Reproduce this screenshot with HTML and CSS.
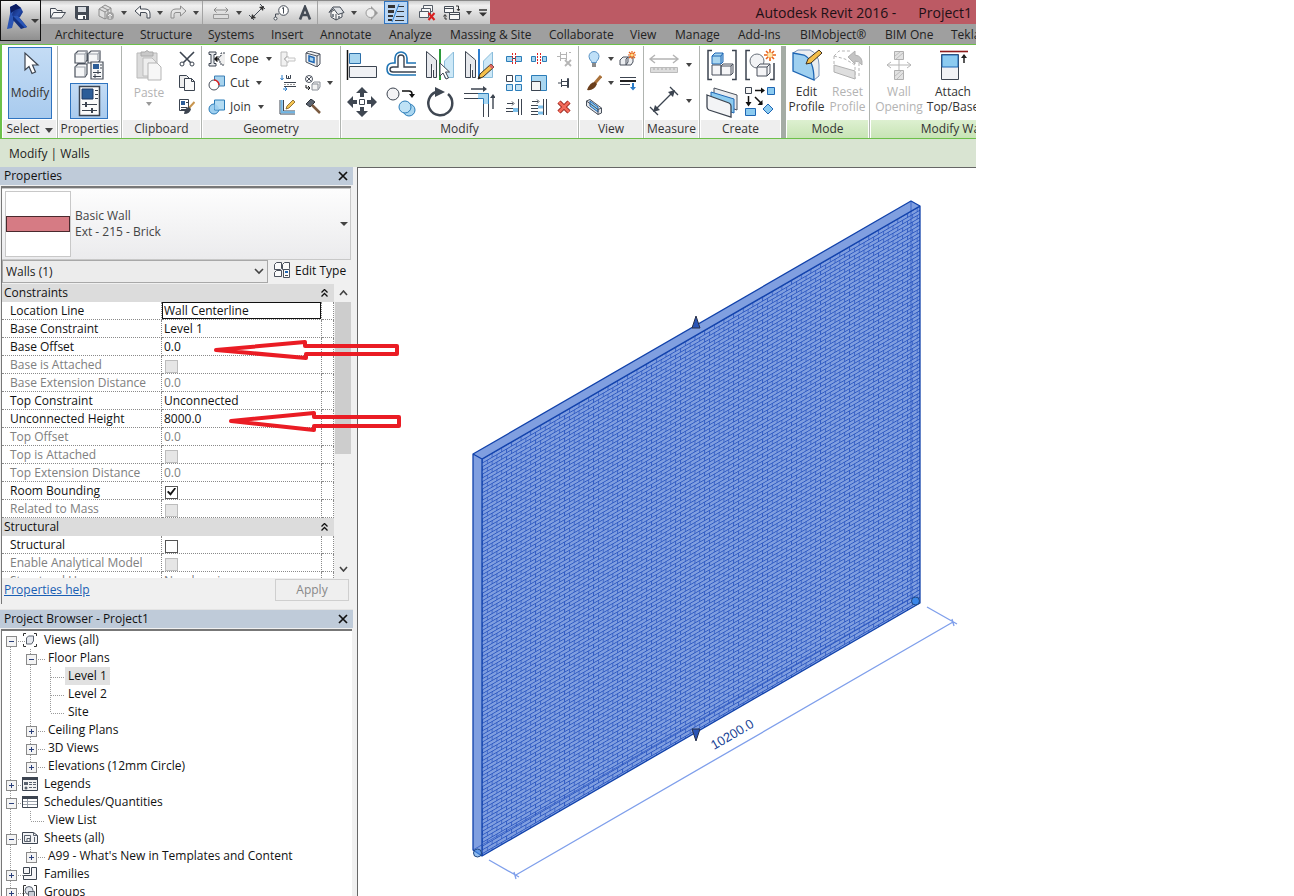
FILE: index.html
```html
<!DOCTYPE html>
<html lang="en">
<head>
<meta charset="utf-8">
<title>Autodesk Revit 2016 - Project1</title>
<link rel="stylesheet" href="styles.css">
</head>
<body>
<div class="app">
  <header class="head">
    <button class="appbtn" aria-label="Application menu">
      <svg width="40" height="40" viewBox="0 0 40 40"><defs><linearGradient id="rg" x1="0" y1="0" x2="1" y2="1"><stop offset="0" stop-color="#0b1b5e"/><stop offset=".6" stop-color="#2349a8"/><stop offset="1" stop-color="#0d2470"/></linearGradient></defs><path d="M9 6 15 3 15 12 11 27 6 28 9 13Z" fill="#2b55b4"/><path d="M15 3 20 7 22 11 19 16 14 18 11 14Z" fill="url(#rg)"/><path d="M9 6 15 3 20 7 14 9 10 12Z" fill="#0b1c62"/><path d="M12 15 17 15 26 26 20 28 12 19Z" fill="#12307f"/><path d="M12 15 17 15 26 26 24 27Z" fill="#2a56b8"/><path d="M30 18h8l-4 4z" fill="#3a3a3a"/></svg>
    </button>
    <div class="titlebar">
      <div class="qat">
        <button aria-label="Open"><svg width="18" height="16" viewBox="0 0 18 16"><path d="M1.500 13V3.500h5l1.500 2h5v2M1.500 13l3-5.500h12L12.500 13z" fill="#f5f5f5" stroke="#444b55"/></svg></button>
        <button aria-label="Save"><svg width="16" height="16" viewBox="0 0 16 16"><path d="M1 1h14v14H3l-2-2z" fill="#444b55"/><path d="M4 2h8v5H4z" fill="#d7dbe0"/><path d="M4 10h8v4H4z" fill="#fff"/><path d="M9 11h2v3H9z" fill="#444b55"/></svg></button>
        <button aria-label="Synchronize"><svg width="17" height="17" viewBox="0 0 17 17"><g fill="#dedede" stroke="#8c8c8c"><path d="M1 5l6-4 6 3v7l-6 4-6-3z"/><path d="M1 5l6 3 6-4M7 8v7M4 3l6 3v7"/></g><circle cx="12" cy="12" r="4" fill="#a2a2a2"/><path d="M10 12l2-2 2 2M12 10v5" stroke="#eee" fill="none"/></svg></button>
        <button class="car" aria-label="Sync options"></button>
        <button aria-label="Undo"><svg width="17" height="15" viewBox="0 0 17 15"><path d="M1 6 6.500 1v3H11q5 0 5 5v4h-3V9.500Q13 7.500 11 7.500H6.500V11z" fill="#f7f7f7" stroke="#444b55"/></svg></button>
        <button class="car" aria-label="Undo list"></button>
        <button aria-label="Redo"><svg width="17" height="15" viewBox="0 0 17 15"><path d="M16 6 10.500 1v3H6q-5 0-5 5v4h3V9.500Q4 7.500 6 7.500h4.500V11z" fill="#e4e4e4" stroke="#8e8e8e"/></svg></button>
        <button class="car" aria-label="Redo list"></button>
        <i class="sep"></i>
        <button aria-label="Measure"><svg width="16" height="12" viewBox="0 0 16 12"><path d="M1 3h14M3.500.5 1 3l2.500 2.500M12.500.5 15 3l-2.500 2.500" fill="none" stroke="#8a8a8a"/><path d="M.5 7.500h15v4H.5z" fill="#ddd" stroke="#999"/></svg></button>
        <button class="car" aria-label="Measure options"></button>
        <button aria-label="Aligned dimension"><svg width="17" height="17" viewBox="0 0 17 17"><path d="M3 14 14 3M0 11l5 5M11 0l5 5" stroke="#444b55" fill="none"/><path d="M2 15l1-5 4 4zM15 2l-1 5-4-4z" fill="#333"/></svg></button>
        <button aria-label="Tag"><svg width="16" height="16" viewBox="0 0 16 16"><circle cx="10.500" cy="5.500" r="4.800" fill="#fff" stroke="#444b55"/><path d="M10.500 8.500v-6l-1.500 1M6 9H2.500v4" fill="none" stroke="#444b55"/><circle cx="2.500" cy="13.500" r="1.500" fill="#fff" stroke="#444b55"/></svg></button>
        <button aria-label="Text"><svg width="16" height="16" viewBox="0 0 16 16"><path d="M3 14.500 8 2l5 12.500M5 10h6" fill="none" stroke="#444b55" stroke-width="2.600"/></svg></button>
        <i class="sep"></i>
        <button aria-label="3D view"><svg width="17" height="16" viewBox="0 0 17 16"><path d="M3 7v5l5 3 6-3V7L9 3z" fill="#f4f4f4" stroke="#444b55"/><path d="M1 7.500 5 2h7l4 5.500-6 2L5.500 3.500 1 7.500M8 9v6" fill="#dfe2e6" stroke="#444b55"/><path d="M4 9h2v3H4zM10 11h2v2h-2z" fill="#7c838c"/></svg></button>
        <button class="car" aria-label="3D options"></button>
        <button aria-label="Section"><svg width="14" height="14" viewBox="0 0 14 14"><path d="M6 0v14l7-7z" fill="#9a9a9a"/><circle cx="5.500" cy="7" r="4.500" fill="#eee" stroke="#999"/></svg></button>
        <button class="on" aria-label="Thin lines" aria-pressed="true"><svg width="18" height="18" viewBox="0 0 18 18"><path d="M1 2.500h7M1 7.500h6" stroke="#333" stroke-width="3"/><path d="M1 12h5M1 16h4" stroke="#333" stroke-width="2"/><path d="M11 2.500h6M10 7.500h7M9 12.500h8M8 16.500h9" stroke="#333"/><path d="M12 0 5 18" stroke="#2a7fd0"/></svg></button>
        <i class="sep"></i>
        <button aria-label="Close hidden windows"><svg width="17" height="17" viewBox="0 0 17 17"><g fill="#f7f7f7" stroke="#555c66"><path d="M4.500 1.500h9v6h-9z"/><path d="M2.500 4.500h9v6h-9z"/><path d="M.5 7.500h9v6h-9z"/></g><path d="m9.500 9 6 7M15.500 9l-6 7" stroke="#d81f1f" stroke-width="2"/></svg></button>
        <button aria-label="Switch windows"><svg width="17" height="17" viewBox="0 0 17 17"><g fill="#f7f7f7" stroke="#444b55"><path d="M1.500 2.500h9v6h-9z"/><path d="M6.500 8.500h10v7h-10zM6.500 10.500h10M1.500 4.500h9"/></g><path d="M13 2h2.500v4M14 5l1.500 2L17 5M4 15H2v-4M.5 12.500 2 10.500l1.500 2" fill="none" stroke="#333"/></svg></button>
        <button class="car" aria-label="Window list"></button>
        <button class="cust" aria-label="Customize toolbar"><svg width="10" height="8" viewBox="0 0 10 8"><path d="M1 1h8" stroke="#333" stroke-width="1.500"/><path d="M1 3.500h8L5 7.500z" fill="#333"/></svg></button>
      </div>
      <div class="title"><span>Autodesk Revit 2016 -</span><span>Project1</span></div>
    </div>
    <nav class="tabs">
      <a href="#">Architecture</a><a href="#">Structure</a><a href="#">Systems</a><a href="#">Insert</a><a href="#">Annotate</a><a href="#">Analyze</a><a href="#">Massing &amp; Site</a><a href="#">Collaborate</a><a href="#">View</a><a href="#">Manage</a><a href="#">Add-Ins</a><a href="#">BIMobject®</a><a href="#">BIM One</a><a href="#">Tekla</a>
    </nav>
  </header>

  <section class="ribbon" aria-label="Ribbon">
    <div class="pan p-select"><div class="body">
      <button class="big on"><svg width="32" height="32" viewBox="0 0 32 32"><path d="M11 4v17l4-3.500 3 7 3.500-1.500-3-7H24z" fill="#fff" stroke="#3c4450" stroke-width="1.200"/></svg><span>Modify</span></button>
    </div><h2>Select <i class="tri"></i></h2></div>

    <div class="pan p-prop"><div class="body col">
      <button class="lg" aria-label="Type properties"><svg width="32" height="32" viewBox="0 0 32 32"><g fill="#f6f7f8" stroke="#4a515c" stroke-width="1.200"><path d="M2 5l3-3h9v9l-2 3H2zM15 5l3-3h9v9l-2 3H15zM2 18l3-3h9v10l-2 3H2z"/><path d="M2 5h10v9M12 5l2-3M15 5h10v6M25 5l2-3M2 18h10v9" fill="none" stroke="#9aa0a8"/><path d="M18 13h12v17H18z"/></g><path d="M20 15h6v5h-6z" fill="#2c5d98"/><path d="M27 16h2M27 19h2M20 23.500h8M20 27.500h8M25 21v4M22 25v4" stroke="#3c4450"/></svg></button>
      <button class="lg on" aria-label="Properties palette"><svg width="32" height="32" viewBox="0 0 32 32"><path d="M6.500 1.500h20v29h-20z" fill="#fbfbfb" stroke="#3c4450" stroke-width="1.500"/><path d="M9 4h11v10H9z" fill="#2c5d98" stroke="#1c3b66"/><path d="M22 5.500h3M22 9.500h3M22 13.500h3M9 19.500h15M9 25.500h15" stroke="#3c4450"/><path d="M13 17v5M19 23v5" stroke="#3c4450" stroke-width="2"/></svg></button>
    </div><h2>Properties</h2></div>

    <div class="pan p-clip"><div class="body">
      <button class="big off"><svg width="32" height="32" viewBox="0 0 32 32"><path d="M4 4h20v25H4z" fill="#dcdcdc" stroke="#b9b9b9"/><path d="M8 3h4q2-3 4 0h4v4H8z" fill="#c9c9c9" stroke="#aaa"/><path d="M10 9h9l4 4v14H10z" fill="#eee" stroke="#bdbdbd"/><path d="M15 14h9l4 4v13H15z" fill="#f7f7f7" stroke="#b5b5b5"/></svg><span>Paste</span><i class="tri sm"></i></button>
      <div class="col">
        <button class="s" aria-label="Cut"><svg width="16" height="16" viewBox="0 0 16 16"><path d="M1 1 13 13M15 1 3 13" stroke="#3c4450" stroke-width="1.600"/><circle cx="3" cy="13" r="2" fill="#fff" stroke="#3c4450"/><circle cx="13" cy="13" r="2" fill="#fff" stroke="#3c4450"/></svg></button>
        <button class="s" aria-label="Copy"><svg width="16" height="16" viewBox="0 0 16 16"><path d="M.5.5h7l3 3v9H.5z" fill="#eee" stroke="#3c4450"/><path d="M5.500 3.500h7l3 3v9h-10zM12.500 3.500v3h3" fill="#fafafa" stroke="#3c4450"/></svg></button>
        <button class="s" aria-label="Match type"><svg width="16" height="16" viewBox="0 0 16 16"><path d="M.5.5h9v11h-9z" fill="#fff" stroke="#3c4450"/><path d="M2 2h4v4H2z" fill="#2c5d98"/><path d="M7 3.500h2M2 8.500h6M2 10.500h5" stroke="#3c4450"/><path d="M15.500 3 10 9" stroke="#c8954e" stroke-width="2"/><path d="M10 8q-4 0-5 7 6 0 7-5z" fill="#3c4450"/></svg></button>
      </div>
    </div><h2>Clipboard</h2></div>

    <div class="pan p-geo"><div class="body">
      <div class="col">
        <button class="t"><svg width="18" height="16" viewBox="0 0 18 16"><path d="M1 1h7v2.500H6v9h2V15H1v-2.500h2v-9H1z" fill="#e9ebee" stroke="#3c4450"/><path d="M7 8h5M9.500 5.500 7 8l2.500 2.500" stroke="#111" fill="none" stroke-width="1.500"/><path d="M17 2h-4v3h-2v6h2v3h4" fill="#eee" stroke="#3c4450" stroke-dasharray="2 1"/></svg><span>Cope</span><i class="tri sm"></i></button>
        <button class="t"><svg width="18" height="16" viewBox="0 0 18 16"><path d="M6.500 1h10v10h-10z" fill="#a6d3ee" stroke="#3c7fb5"/><circle cx="6" cy="10" r="5" fill="#fff" stroke="#4a515c"/><path d="M6 5a5 5 0 0 1 5 5" fill="none" stroke="#d22" stroke-width="1.500"/></svg><span>Cut</span><i class="tri sm"></i></button>
        <button class="t"><svg width="18" height="16" viewBox="0 0 18 16"><circle cx="6" cy="10" r="5" fill="#9fd0f0" stroke="#2b7cb8"/><path d="M6.500 1h10v10h-10z" fill="#b4dcf3" stroke="#2b7cb8"/><path d="M6.500 5.200a5 5 0 0 1 4.500 5.300H6.500z" fill="#9fd0f0"/></svg><span>Join</span><i class="tri sm"></i></button>
      </div>
      <div class="col">
        <button class="s" aria-label="Wall joins"><svg width="16" height="16" viewBox="0 0 16 16"><path d="M1 1h6v4l-3 3 3 3v4H1z" fill="#f1f1f1" stroke="#bbb"/><path d="M5 8l3-3v2h7v3H8v2z" fill="#fafafa" stroke="#c4c4c4"/></svg></button>
        <button class="s" aria-label="Beam joins"><svg width="16" height="16" viewBox="0 0 16 16"><path d="M2 0v4M.5 3 2 5l1.500-2M3 14h4M5 12l2 2-2 2" stroke="#2b7cc8" fill="none"/><path d="M6.500 0v3.500h4V0M8.500 1v2M4 7.500h12M4 11.500h12" stroke="#3c4450" fill="none"/><path d="M4 9.500h12" stroke="#999" stroke-dasharray="2 1"/></svg></button>
        <button class="s" aria-label="Paint joins"><svg width="17" height="16" viewBox="0 0 17 16"><path d="M1 1v14h15M4.500 1v11H16" stroke="#3c4450" fill="none"/><path d="M2.700 1v12.300H16" stroke="#6fb5e4" stroke-width="2" fill="none"/><path d="m7 10 1-3 6-6 2 2-6 6z" fill="#f5c451" stroke="#7a5a1e" stroke-width=".8"/></svg></button>
      </div>
      <div class="col">
        <button class="s" aria-label="Split face"><svg width="16" height="16" viewBox="0 0 16 16"><path d="M1 2 4 0l11 3v10l-3 3L1 11z" fill="#eef0f2" stroke="#4a515c"/><path d="M1 2l11 3v11M12 5l3-2" fill="none" stroke="#4a515c"/><path d="m4 5 5 1.500v5L4 10z" fill="#a6d3ee" stroke="#1e66b4" stroke-width="1.500"/></svg></button>
        <button class="s" aria-label="Paint"><svg width="16" height="16" viewBox="0 0 16 16"><circle cx="4" cy="4" r="3.500" fill="#fff" stroke="#4a515c"/><path d="m1.500 1.500 5 5M6.500 1.500l-5 5" stroke="#4a515c"/><path d="M7 9l2-2h6v5l-2 3H7zM7 9h6v5" fill="#f3f3f3" stroke="#8a8f97"/><path d="M1 10v3h3M3 11l2 2-2 2" fill="none" stroke="#111"/></svg></button>
        <button class="s" aria-label="Demolish"><svg width="16" height="16" viewBox="0 0 16 16"><path d="m1 5 5-5 4 3-5 5z" fill="#5a626e" stroke="#2e343c"/><path d="m7 6 8 8" stroke="#7a5a40" stroke-width="2.500"/></svg></button>
      </div>
      <button class="s dd mid" aria-label="Paint options"></button>
    </div><h2>Geometry</h2></div>

    <div class="pan p-mod"><div class="body">
      <div class="lgrid">
        <button class="lg" aria-label="Align"><svg width="32" height="32" viewBox="0 0 32 32"><path d="M1.500 1v30" stroke="#111" stroke-width="1.500"/><path d="M3.500 4.500h11v10h-11z" fill="#a9d6f0" stroke="#2b6ea8"/><path d="M3.500 17.500h27v11h-27z" fill="#f0f1f4" stroke="#3c4450"/></svg></button>
        <button class="lg" aria-label="Offset"><svg width="32" height="32" viewBox="0 0 32 32"><path d="M31 14H22V9a6 6 0 0 0-12 0v5H8q-6 0-6 6t6 6h23" fill="none" stroke="#1f74b4" stroke-width="1.600"/><path d="M31 18H19V9a3 3 0 0 0-6 0v9H8q-3 0-3 2.500T8 23h23" fill="none" stroke="#3c4450" stroke-width="1.400"/></svg></button>
        <button class="lg" aria-label="Mirror pick axis"><svg width="32" height="32" viewBox="0 0 32 32"><path d="M2.500 2.500v26h5V15M12.500 28.500V11L2.500 2.500M7.500 15v13.500M9.500 21v7.500h3" fill="#e6e8ec" stroke="#3c4450"/><path d="M16 0v31" stroke="#2e9a3a" stroke-width="2"/><path d="M29.500 3v25.500h-9V12z" fill="#cde8f7" stroke="#8bbddb"/><path d="M16 14v13l3-3 3 6 2.500-1-3-6h4z" fill="#fff" stroke="#3c4450"/></svg></button>
        <button class="lg" aria-label="Mirror draw axis"><svg width="32" height="32" viewBox="0 0 32 32"><path d="M2.500 2.500v26h5V15M12.500 28.500V11L2.500 2.500M7.500 15v13.500M9.500 21v7.500h3" fill="#e6e8ec" stroke="#3c4450"/><path d="M16 0v29" stroke="#2e7fd0" stroke-width="2"/><path d="M29.500 3v25.500h-9V12z" fill="#cde8f7" stroke="#8bbddb"/><path d="m15 30 2-5 11-10 3 3-11 10z" fill="#f5bf4a" stroke="#3c3020"/><path d="m15 30 1-3 2 2z" fill="#222"/><path d="m26 17 3 3 2-2-3-3z" fill="#d66"/></svg></button>
        <button class="lg" aria-label="Move"><svg width="32" height="32" viewBox="0 0 32 32"><path d="M16 1l6 6h-4v4h-4V7h-4zM16 31l6-6h-4v-4h-4v4h-4zM1 16l6-6v4h4v4H7v4zM31 16l-6-6v4h-4v4h4v4z" fill="#3f4752"/><path d="M13.500 13.500h5v5h-5z" fill="#fff" stroke="#3f4752"/></svg></button>
        <button class="lg" aria-label="Copy element"><svg width="32" height="32" viewBox="0 0 32 32"><circle cx="8" cy="8" r="6" fill="#f3f3f5" stroke="#3c4450"/><path d="M17 5h7q3 0 3 3v2" fill="none" stroke="#111" stroke-width="1.500"/><path d="M24 8h6l-3 4z" fill="#111"/><circle cx="24" cy="24" r="6" fill="#a9d6f0" stroke="#2b7cb8"/><circle cx="20" cy="21" r="6" fill="#bfe2f6" stroke="#2b7cb8"/></svg></button>
        <button class="lg" aria-label="Rotate"><svg width="32" height="32" viewBox="0 0 32 32"><path d="M12 6a12 12 0 1 0 12 2" fill="none" stroke="#3f4752" stroke-width="2.500"/><path d="M11 1l10 5-10 5z" fill="#3f4752"/></svg></button>
        <button class="lg" aria-label="Trim corner"><svg width="32" height="32" viewBox="0 0 32 32"><path d="M8 3h13M30 23V11" fill="none" stroke="#3c4450" stroke-width="1.400"/><path d="M20 0v6l4-3zM27 12h6l-3-4z" fill="#3c4450"/><path d="M1 7.500h14M1 12.500h14M20.500 31V18M25.500 31V18" stroke="#3c4450" fill="none"/><path d="M15 10h8v8" fill="none" stroke="#a9d6f0" stroke-width="5"/><path d="M15 7.500h10.500V18M15 12.500h5.500V18" fill="none" stroke="#2b7cb8"/></svg></button>
      </div>
      <div class="sgrid">
        <button class="s" aria-label="Split element"><svg width="16" height="16" viewBox="0 0 16 16"><path d="M.5 5.500h6v5h-6zM9.500 5.500h6v5h-6z" fill="#a9d6f0" stroke="#2b7cb8"/><path d="M6.500 2v12M9.500 2v12" stroke="#d22" stroke-dasharray="2 1"/><path d="M7 7.500h2" stroke="#3c4450"/></svg></button>
        <button class="s" aria-label="Split with gap"><svg width="16" height="16" viewBox="0 0 16 16"><path d="M.5 5.500h4v5h-4zM11.500 5.500h4v5h-4z" fill="#a9d6f0" stroke="#2b7cb8"/><path d="M6.500 2v12M9.500 2v12" stroke="#d22" stroke-dasharray="2 1"/></svg></button>
        <button class="s" aria-label="Unpin"><svg width="16" height="16" viewBox="0 0 16 16"><path d="M1 5.500h3M4.500 1v9M5 3.500h5M5 7.500h5M10.500 1v8M13 1.500h2" stroke="#b5b5b5" fill="none"/><path d="m9 9 6 6M15 9l-6 6" stroke="#b5b5b5" stroke-width="1.800"/></svg></button>
        <button class="s" aria-label="Array"><svg width="16" height="16" viewBox="0 0 16 16"><path d="M.5.5h6v6h-6z" fill="#fff" stroke="#3c4450"/><path d="M9.500.5h6v6h-6zM.5 9.500h6v6h-6zM9.500 9.500h6v6h-6z" fill="#c4e3f5" stroke="#2b7cb8"/></svg></button>
        <button class="s" aria-label="Scale"><svg width="16" height="16" viewBox="0 0 16 16"><path d="M.5.5h15v15H.5z" fill="#a9d6f0" stroke="#2b7cb8"/><path d="M.5 6.500h9v9h-9z" fill="#f4f4f4" stroke="#3c4450"/></svg></button>
        <button class="s" aria-label="Pin"><svg width="16" height="16" viewBox="0 0 16 16"><path d="M2 8h3M5.500 4v8M6 6.500h5M6 10.500h5M11.500 3.500v9h1v-9z" stroke="#3c4450" fill="none"/></svg></button>
        <button class="s" aria-label="Trim single"><svg width="16" height="16" viewBox="0 0 16 16"><path d="M1 4.500h6M6 2.500l2 2-2 2M0 9.500h8M0 12.500h8M12.500 0v16M15.500 0v16" stroke="#3c4450" fill="none"/><path d="M7 11h5" stroke="#7cc0ec" stroke-width="4"/></svg></button>
        <button class="s" aria-label="Trim multiple"><svg width="16" height="16" viewBox="0 0 16 16"><path d="M1 2.500h6M6 .5l2 2-2 2M0 6.500h7M0 9.500h7M0 12.500h7M0 15.500h7M12.500 0v16M15.500 0v16" stroke="#3c4450" fill="none"/><path d="M7 8h5M7 14h5" stroke="#7cc0ec" stroke-width="3"/></svg></button>
        <button class="s" aria-label="Delete"><svg width="16" height="16" viewBox="0 0 16 16"><path d="m3 3 10 10M13 3 3 13" stroke="#8e1c14" stroke-width="4.500"/><path d="m3 3 10 10M13 3 3 13" stroke="#f26a5a" stroke-width="2.800"/></svg></button>
      </div>
    </div><h2>Modify</h2></div>

    <div class="pan p-view"><div class="body">
      <div class="col">
        <div class="pair"><button class="s" aria-label="Hide"><svg width="16" height="16" viewBox="0 0 16 16"><path d="M5.500 10.500Q3 8 3 5.500a5 5 0 0 1 10 0Q13 8 10.500 10.500v1h-5z" fill="#bfe0f8" stroke="#5b93c4"/><path d="M6 13h4M6 15h4" stroke="#666" stroke-width="1.500"/></svg></button><button class="dd" aria-label="Hide options"></button></div>
        <div class="pair"><button class="s" aria-label="Override graphics"><svg width="16" height="16" viewBox="0 0 16 16"><path d="m15 1-6 7" stroke="#a9713a" stroke-width="3"/><path d="M9 7q-5 0-8 8 7 1 10-6z" fill="#6b3f1c"/></svg></button><button class="dd" aria-label="Override options"></button></div>
        <button class="s" aria-label="Selection box"><svg width="16" height="16" viewBox="0 0 16 16"><path d="M.5 2 4 .5 15.500 9v5L12 15.500.5 7z" fill="#e4e6ea" stroke="#4a515c"/><path d="m4 2 8 6v5L4 7z" fill="#8ccbf0" stroke="#1e66b4"/><path d="m.5 2 11.500 8.500v5M12 10.500 15.500 9" fill="none" stroke="#4a515c"/></svg></button>
      </div>
      <div class="col">
        <button class="s" aria-label="Displace"><svg width="18" height="16" viewBox="0 0 18 16"><path d="M1 9l3-3h5v5l-2 3H1zM7 8l2-2h5v5l-2 3H7z" fill="#eceef1" stroke="#4a515c"/><path d="M13 0v8M9 4h8M10 1l6 6M16 1l-6 6" stroke="#e8641a" stroke-width="1.200"/><circle cx="13" cy="4" r="1.600" fill="#ffe08a"/></svg></button>
        <button class="s" aria-label="Linework"><svg width="18" height="16" viewBox="0 0 18 16"><path d="M1 2.500h16M1 9.500h10" stroke="#3c4450"/><path d="M1 6h16" stroke="#222" stroke-width="2"/><path d="M13 8v4h-2l3 3.500 3-3.500h-2V8z" fill="#2b7cc8"/></svg></button>
      </div>
    </div><h2>View</h2></div>

    <div class="pan p-meas"><div class="body col">
      <div class="pair"><button class="lg" aria-label="Measure distance"><svg width="32" height="32" viewBox="0 0 32 32"><path d="M2 10h28M7 6l-5 4 5 4M25 6l5 4-5 4" fill="none" stroke="#b4b4b4" stroke-width="1.400"/><path d="M2.500 18.500h27v5h-27z" fill="#dcdcdc" stroke="#bbb"/><path d="M6 19v2M10 19v2M14 19v2M18 19v2M22 19v2M26 19v2" stroke="#aaa"/></svg></button><button class="dd" aria-label="Measure options"></button></div>
      <div class="pair"><button class="lg" aria-label="Dimension"><svg width="32" height="32" viewBox="0 0 32 32"><path d="M6 26 26 6M2 22l8 8M22 2l8 8" stroke="#3c4450" stroke-width="1.300"/><path d="m5 27 2-7 5 5zM27 5l-2 7-5-5z" fill="#3c4450"/></svg></button><button class="dd" aria-label="Dimension options"></button></div>
    </div><h2>Measure</h2></div>

    <div class="pan p-create"><div class="body">
      <div class="lgrid two">
        <button class="lg" aria-label="Create assembly"><svg width="32" height="32" viewBox="0 0 32 32"><path d="M6 1.500H2v29h4M26 1.500h4v29h-4" fill="none" stroke="#3c4450" stroke-width="1.500"/><path d="M6 7l3-3h8v9l-2 2H6z" fill="#a9d6f0" stroke="#1e66b4"/><path d="M6 7h9v8M15 7l2-3" fill="none" stroke="#1e66b4"/><path d="M6 16h9v10H6zM15 17l2-2h10v9l-2 2H15zM15 17h10v9M25 17l2-2" fill="#f5f5f7" stroke="#4a515c"/></svg></button>
        <button class="lg" aria-label="Create group"><svg width="32" height="32" viewBox="0 0 32 32"><path d="M6 1.500H2v29h4M26 30.500h4V14" fill="none" stroke="#3c4450" stroke-width="1.500"/><circle cx="13" cy="12" r="7" fill="#f2f3f5" stroke="#6a717b"/><path d="M13 18l3-3h10v9l-3 3H13zM13 18h10v9M23 18l3-3" fill="#f5f5f7" stroke="#4a515c"/><path d="M26 0v12M20 6h12M22 2l8 8M30 2l-8 8" stroke="#e8641a" stroke-width="1.600"/><circle cx="26" cy="6" r="2.500" fill="#ffe9a8"/></svg></button>
        <button class="lg" aria-label="Create parts"><svg width="32" height="32" viewBox="0 0 32 32"><path d="m8 2 23 7v15L8 16z" fill="#e9ebee" stroke="#4a515c"/><path d="m5 6 23 7v14L5 19z" fill="#8ccbf0" stroke="#1e66b4"/><path d="m1 9 22 8q2 1 2 3v11L3 24q-2-1-2-3z" fill="#f3f4f6" stroke="#3c4450" stroke-width="1.300"/></svg></button>
        <button class="lg" aria-label="Create similar"><svg width="32" height="32" viewBox="0 0 32 32"><path d="M1.500 1.500h6v6h-6z" fill="#f4f4f4" stroke="#3c4450"/><path d="M23.500 1.500h7v7h-7zM1.500 22.500h10v7h-10zM24 18l5 5-5 5-5-5z" fill="#8ccbf0" stroke="#1e66b4"/><path d="M11 4.500h8M4.500 10v8M11 11l7 7" stroke="#111" stroke-width="1.500"/><path d="m17 1.500 4 3-4 3zM1.500 16h6l-3 4.500zM18.500 14v5h-5z" fill="#111"/></svg></button>
      </div>
    </div><h2>Create</h2></div>

    <i class="gap"></i>

    <div class="pan p-mode green"><div class="body">
      <button class="big"><svg width="32" height="32" viewBox="0 0 32 32"><path d="m2 4 5-3h12q9 4 9 15v11l-5 4" fill="#eceef1" stroke="#7b94b8"/><path d="M2 4l11 2q10 5 10 25L2 22z" fill="#9fd0f0" stroke="#1e66b4" stroke-width="1.300"/><path d="m15 15 2-5L28 1l3 3-11 10z" fill="#f5bf4a" stroke="#3c3020"/></svg><span>Edit<br>Profile</span></button>
      <button class="big off"><svg width="32" height="32" viewBox="0 0 32 32"><path d="M2 7 7 2h12M27 14v14" fill="none" stroke="#b5b5b5" stroke-dasharray="3 2"/><path d="m2 7 11 3 10 6v14M2 7v8" fill="none" stroke="#b5b5b5" stroke-dasharray="3 2"/><path d="m2 16 21 6v8L2 23z" fill="#dedede" stroke="#b0b0b0"/><path d="m16 8 7-6v4q8 1 7 10-3-4-7-4v3z" fill="#c4c4c4" stroke="#b0b0b0"/></svg><span>Reset<br>Profile</span></button>
    </div><h2>Mode</h2></div>

    <div class="pan p-walls green"><div class="body">
      <button class="big off wide"><svg width="32" height="32" viewBox="0 0 32 32"><path d="M11.500 2.500h9v8h-9zM11.500 21.500h9v9h-9z" fill="#e2e2e2" stroke="#b0b0b0"/><path d="m12 7 5-4M13 10l7-6M12 27l6-5M14 30l6-6" stroke="#bdbdbd"/><path d="M4 16h24M8 13l-4 3 4 3M24 13l4 3-4 3M16 11v10" stroke="#b5b5b5" fill="none"/></svg><span>Wall<br>Opening</span></button>
      <button class="big wide"><svg width="32" height="32" viewBox="0 0 32 32"><path d="M3 2.500h28" stroke="#8e1c1c" stroke-width="1.600"/><path d="M4.500 5.500h17v25h-17z" fill="#f0f1f4" stroke="#3c4450"/><path d="M5 6h16v12H5z" fill="#8ccbf0" stroke="#1e66b4"/><path d="M27 14V6" stroke="#222" stroke-width="1.500"/><path d="M24 9h6l-3-4z" fill="#222"/></svg><span>Attach<br>Top/Base</span></button>
    </div><h2>Modify Wall</h2></div>
  </section>

  <div class="options">Modify | Walls</div>

  <main class="main">
    <aside class="side">
      <section class="props">
        <header class="ph"><h3>Properties</h3><button aria-label="Close properties"><svg width="10" height="10" viewBox="0 0 10 10"><path d="m1 1 8 8M9 1 1 9" stroke="#111" stroke-width="1.700"/></svg></button></header>
        <div class="pbox">
          <button class="type"><span class="thumb"><i></i></span><span class="tname">Basic Wall<br>Ext - 215 - Brick</span><i class="tri"></i></button>
          <div class="filter">
            <div class="sel"><select aria-label="Filter"><option>Walls (1)</option></select><svg width="10" height="7" viewBox="0 0 10 7"><path d="m1 1 4 4 4-4" fill="none" stroke="#444" stroke-width="1.600"/></svg></div>
            <button class="edit"><svg width="17" height="17" viewBox="0 0 17 17"><g fill="#fafafa" stroke="#4a515c"><path d="M.5 2.500l2-2h5v6l-1 1h-6zM8.500 2.500l2-2h5v6l-1 1h-6zM.5 10.500l2-2h5v6h-7z"/><path d="M9.500 7.500h6v8h-6z"/></g><path d="M11 9h3v2h-3z" fill="#1e66b4"/><path d="M11 13.500h3" stroke="#4a515c"/></svg>Edit Type</button>
          </div>
          <div class="gridwrap">
            <div class="gridclip">
              <table class="grid">
                <colgroup><col class="c1"><col class="c2"><col class="c3"></colgroup>
                <tbody>
                <tr class="gh"><th colspan="3"><span>Constraints<svg width="7" height="8" viewBox="0 0 7 8"><path d="m.5 3.500 3-3 3 3M.5 7.500l3-3 3 3" fill="none" stroke="#111" stroke-width="1.300"/></svg></span></th></tr>
                <tr><th><label for="loc">Location Line</label></th><td class="edt"><input id="loc" type="text" value="Wall Centerline"></td><td></td></tr>
                <tr><th>Base Constraint</th><td>Level 1</td><td></td></tr>
                <tr><th>Base Offset</th><td>0.0</td><td></td></tr>
                <tr class="dis"><th><label for="b1">Base is Attached</label></th><td><input id="b1" type="checkbox" disabled></td><td></td></tr>
                <tr class="dis"><th>Base Extension Distance</th><td>0.0</td><td></td></tr>
                <tr><th>Top Constraint</th><td>Unconnected</td><td></td></tr>
                <tr><th>Unconnected Height</th><td>8000.0</td><td></td></tr>
                <tr class="dis"><th>Top Offset</th><td>0.0</td><td></td></tr>
                <tr class="dis"><th><label for="b2">Top is Attached</label></th><td><input id="b2" type="checkbox" disabled></td><td></td></tr>
                <tr class="dis"><th>Top Extension Distance</th><td>0.0</td><td></td></tr>
                <tr><th><label for="b3">Room Bounding</label></th><td><input id="b3" type="checkbox" checked></td><td></td></tr>
                <tr class="dis"><th><label for="b4">Related to Mass</label></th><td><input id="b4" type="checkbox" disabled></td><td></td></tr>
                <tr class="gh"><th colspan="3"><span>Structural<svg width="7" height="8" viewBox="0 0 7 8"><path d="m.5 3.500 3-3 3 3M.5 7.500l3-3 3 3" fill="none" stroke="#111" stroke-width="1.300"/></svg></span></th></tr>
                <tr><th><label for="b5">Structural</label></th><td><input id="b5" type="checkbox"></td><td></td></tr>
                <tr class="dis"><th><label for="b6">Enable Analytical Model</label></th><td><input id="b6" type="checkbox" disabled></td><td></td></tr>
                <tr class="dis"><th>Structural Usage</th><td>Non-bearing</td><td></td></tr>
                </tbody>
              </table>
            </div>
            <div class="vbar"><button aria-label="Scroll up"><svg width="9" height="6" viewBox="0 0 9 6"><path d="m1 5 3.500-4L8 5" fill="none" stroke="#444" stroke-width="1.600"/></svg></button><div class="track"><i></i></div><button aria-label="Scroll down"><svg width="9" height="6" viewBox="0 0 9 6"><path d="m1 1 3.500 4L8 1" fill="none" stroke="#444" stroke-width="1.600"/></svg></button></div>
          </div>
          <footer class="pf"><a href="#">Properties help</a><button disabled>Apply</button></footer>
        </div>
      </section>

      <section class="browser">
        <header class="ph"><h3>Project Browser - Project1</h3><button aria-label="Close browser"><svg width="10" height="10" viewBox="0 0 10 10"><path d="m1 1 8 8M9 1 1 9" stroke="#111" stroke-width="1.700"/></svg></button></header>
        <ul class="tree">
          <li><button class="tg m first" aria-label="Collapse"></button><i class="h"></i><svg width="16" height="16" viewBox="0 0 16 16"><path d="M4 1.500H1.500V4M12 1.500h2.500V4M4 14.500H1.500V12M12 14.500h2.500V12" fill="none" stroke="#333"/><path d="M4.500 6l2-2h5v5l-2 3h-5z" fill="#e7eaf0" stroke="#5a626e"/></svg><span>Views (all)</span></li>
          <li><i class="g"></i><button class="tg m" aria-label="Collapse"></button><i class="h"></i><span>Floor Plans</span></li>
          <li><i class="g"></i><i class="g"></i><i class="g"></i><i class="h"></i><span class="cur">Level 1</span></li>
          <li><i class="g"></i><i class="g"></i><i class="g"></i><i class="h"></i><span>Level 2</span></li>
          <li><i class="g"></i><i class="g"></i><i class="g end"></i><i class="h"></i><span>Site</span></li>
          <li><i class="g"></i><button class="tg" aria-label="Expand"></button><i class="h"></i><span>Ceiling Plans</span></li>
          <li><i class="g"></i><button class="tg" aria-label="Expand"></button><i class="h"></i><span>3D Views</span></li>
          <li><i class="g"></i><button class="tg last" aria-label="Expand"></button><i class="h"></i><span>Elevations (12mm Circle)</span></li>
          <li><button class="tg" aria-label="Expand"></button><i class="h"></i><svg width="16" height="16" viewBox="0 0 16 16"><path d="M.5 1.500h15v13H.5z" fill="#f2f2f2" stroke="#3c4450"/><path d="M0 1h16v3H0z" fill="#3c4450"/><path d="M2 6h4v3H2z" fill="#5a626e"/><circle cx="4" cy="12" r="1.500" fill="#5a626e"/><path d="M7 6.500h3M11 6.500h3M7 8.500h3M11 8.500h3M7 11.500h3M11 11.500h3" stroke="#5a626e"/></svg><span>Legends</span></li>
          <li><button class="tg m" aria-label="Collapse"></button><i class="h"></i><svg width="16" height="16" viewBox="0 0 16 16"><path d="M.5 2.500h15v11H.5z" fill="#fff" stroke="#3c4450"/><path d="M0 2h16v3H0z" fill="#3c4450"/><path d="M1 7.500h14M1 10.500h14M5.500 5v8" stroke="#9aa1ab"/></svg><span>Schedules/Quantities</span></li>
          <li><i class="g"></i><i class="g end"></i><i class="h"></i><span>View List</span></li>
          <li><button class="tg m" aria-label="Collapse"></button><i class="h"></i><svg width="16" height="16" viewBox="0 0 16 16"><path d="M.5 2.500h11l4 3v8H.5z" fill="#f2f3f5" stroke="#3c4450"/><path d="M2.500 5.500h6v6h-6zM5 8.500h3v3H5zM11.500 2.500v3h4M12.500 7v5" fill="none" stroke="#5a626e"/></svg><span>Sheets (all)</span></li>
          <li><i class="g"></i><button class="tg last" aria-label="Expand"></button><i class="h"></i><span>A99 - What's New in Templates and Content</span></li>
          <li><button class="tg" aria-label="Expand"></button><i class="h"></i><svg width="16" height="16" viewBox="0 0 16 16"><path d="M1.500 1.500h6v6h-6zM9.500 1.500h5v12h-13v-4h8z" fill="#f5f5f7" stroke="#3c4450"/></svg><span>Families</span></li>
          <li><button class="tg" aria-label="Expand"></button><i class="h"></i><svg width="16" height="16" viewBox="0 0 16 16"><path d="M4 1.500H1.500v13H4M12 1.500h2.500v13H12" fill="none" stroke="#333"/><circle cx="7" cy="6.500" r="4" fill="#dfe3ea" stroke="#5a626e"/><path d="M6.500 7.500h6v5h-6z" fill="#c9ced6" stroke="#5a626e"/></svg><span>Groups</span></li>
        </ul>
      </section>
    </aside>

    <section class="view" aria-label="3D view">
      <svg class="scene" width="618" height="728" viewBox="358 168 618 728">
        <defs>
          <pattern id="brick" width="9.660" height="7.440" patternUnits="userSpaceOnUse" patternTransform="matrix(1 -.5776 0 1 482 459)">
            <path d="M0 .5h9.660M0 4.220h9.660M.5.500v3.720M5.330 4.220v3.720" stroke="#2450bd" stroke-width=".8" fill="none"/>
          </pattern>
        </defs>
        <path d="M473 454 911 201 920 206 920 603 482 856 473 850Z" fill="#809fe0"/>
        <path d="M482 459 920 206V603L482 856Z" fill="url(#brick)"/>
        <path d="M473 850 911 598 920 603M911 201V598" fill="none" stroke="#2450bd" stroke-opacity=".7"/>
        <path d="M473 454 911 201 920 206V603L482 856 473 850ZM473 454 482 459V856M482 459 920 206" fill="none" stroke="#1142ab" stroke-width="1.300" stroke-linejoin="round"/>
        <path d="m696 316 4 12h-8zM692 729h8l-4 12z" fill="#2a55b5" stroke="#27304a"/>
        <circle cx="477.500" cy="853" r="4" fill="#4c94e8" fill-opacity=".6" stroke="#21477f"/>
        <circle cx="915.500" cy="601" r="4" fill="#3a86e8" stroke="#21477f"/>
        <path d="M489 860 519 877M927 607 957 624M515 875.500 953 622M514 872l2 7M952 619l2 7" fill="none" stroke="#7f9feb" stroke-width="1.300"/>
        <text x="714" y="750" transform="rotate(-30 714 750)" class="dim">10200.0</text>
        <g class="marks"><path d="m216 350 89-8v4h92v8H306v4zM231 421l83-8v4h85v9h-85v4z"/></g>
      </svg>
    </section>
  </main>
</div>
</body>
</html>
```
FILE: styles.css
```css
* { box-sizing: border-box; }
body {
  margin: 0;
  height: 100vh;
  overflow: hidden;
  background: #fff;
  display: grid;
  grid-template-columns: minmax(0, 976fr) 318fr;
  font: 12px/18px "Open Sans", "Noto Sans", sans-serif;
  color: #1c1c1c;
}
button {
  margin: 0; padding: 0; border: 0; background: none;
  font: inherit; color: inherit;
  display: flex; align-items: center; justify-content: center;
}
svg { display: block; flex: none; }
h2, h3 { margin: 0; font: inherit; }
i { font-style: normal; }

.app { height: 100vh; display: flex; flex-direction: column; overflow: hidden; background: #f0f0f0; }

/* title bar and tabs */
.head {
  flex: none;
  display: grid;
  grid-template: 24px 20px / 41px minmax(0, 1fr);
  background: #9f9f9f;
}
.appbtn {
  grid-row: 1 / 3; height: 41px;
  border: 1px solid #111;
  background: linear-gradient(#f2f2f2, #b9b9b9 50%, #8f8f8f);
}
.titlebar { display: flex; background: #bc5a64; min-width: 0; }
.qat {
  flex: none; display: flex; padding-left: 5px;
  background: linear-gradient(#cfcfcf, #f0f0f0 20%, #c4c4c4);
  border-top: 1px solid #8a8a8a;
}
.qat button { width: 24px; }
.qat .car { width: 12px; }
.qat .cust { width: 15px; }
.qat .on { background: #b9d6f4; border: 1px solid #2f74c0; }
.qat .sep { width: 7px; border-left: 1px solid #a3a3a3; }
.car::before, .dd::before, .tri {
  content: ""; display: inline-block;
  border: 3px solid transparent; border-top: 4px solid #444; border-bottom: 0;
}
.title {
  flex: 1; display: flex; justify-content: flex-end; gap: 22px;
  padding: 0 4px 0 0; font-size: 14px; line-height: 25px; white-space: nowrap; color: #1d1016;
}
.tabs {
  display: grid; padding-left: 14px; overflow: hidden;
  grid-template-columns: 85px 68px 63px 49px 69px 61px 99px 81px 45px 63px 62px 85px 66px 40px;
}
.tabs a { color: #222; text-decoration: none; white-space: nowrap; line-height: 21px; }

/* ribbon */
.ribbon {
  flex: none; display: flex; overflow: hidden;
  border: solid #6cc04a; border-width: 1px 0 1px 2px;
  padding-top: 1px; background: #fff;
}
.pan { flex: none; display: flex; flex-direction: column; padding-right: 1px; border-right: 1px solid #b0b4b0; }
.p-select { width: 56px; } .p-prop { width: 64px; } .p-clip { width: 80px; }
.p-geo { width: 139px; } .p-mod { width: 238px; } .p-view { width: 65px; }
.p-meas { width: 56px; } .p-create { width: 81px; border-right: 0; } .p-mode { width: 84px; }
.p-walls { width: 168px; }
.gap { flex: none; width: 5px; background: #a5aca5; }
.pan h2 { height: 18px; margin-left: 1px; text-align: center; background: #eee; color: #333; }
.pan.green h2 { background: linear-gradient(#ddf0d0, #c8e4b6); }
.body { height: 74px; padding-top: 1px; display: flex; }
.col { display: flex; flex-direction: column; align-items: center; }
.big { flex-direction: column; justify-content: flex-start; padding-top: 2px; width: 40px; height: 72px; line-height: 15px; color: #333; }
.big span { padding-top: 3px; }
.p-select .big, .p-clip .big { line-height: 18px; }
.p-select .body { padding-left: 6px; }
.big.on { width: 44px; padding-top: 1px; }
.big.wide { width: 54px; }
.on { background: linear-gradient(#c4dcf5, #a9cbee); border: 1px solid #2f74c0; }
.off { color: #b3b3b3; }
.lg { width: 38px; height: 36px; }
.s { width: 25px; height: 24px; }
.dd { width: 9px; height: 24px; }
.tri.sm { border-width: 3px; border-top-width: 4px; border-bottom: 0; }
.p-select h2 .tri { border-width: 4px; border-top-width: 5px; border-bottom: 0; margin-left: 2px; }
.off .tri { border-top-color: #999; }
.p-clip .body { padding-left: 6px; }
.p-clip .big { width: 42px; }
.p-clip .col { margin-left: 4px; }
.p-geo .body { padding-left: 6px; }
.p-geo .col:first-child { width: 67px; align-items: stretch; }
.t { height: 24px; justify-content: flex-start; gap: 4px; color: #333; }
.t .tri { margin-left: 3px; }
.dd.mid { width: 9px; margin-top: 24px; }
.lgrid { display: grid; grid-template-columns: repeat(4, 39px); padding-left: 2px; }
.lgrid.two { grid-template-columns: 38px 38px; padding-left: 3px; }
.lgrid + .sgrid { margin-left: 2px; }
.sgrid { display: grid; grid-template-columns: repeat(3, 25px); grid-auto-rows: 24px; }
.pair { display: flex; align-items: center; }
.p-view .body { padding-left: 2px; }
.p-view .col { align-items: flex-start; }
.p-meas .col, .p-meas.col { align-items: flex-start; }
.p-meas .lg { width: 40px; }
.p-mode .body { justify-content: space-around; }
.p-walls .body { padding-left: 2px; }

.options { flex: none; height: 28px; padding: 6px 9px 0; background: #d9e4d2; }

/* work area */
.main { flex: 1; min-height: 0; display: flex; }
.side { flex: none; width: 353px; display: flex; flex-direction: column; color: #111; }
.ph {
  height: 18px; padding: 0 5px 0 4px;
  display: flex; justify-content: space-between; align-items: center;
  background: #bfcbd9;
}
.pbox { margin: 1px 2px 0 1px; border: solid #777; border-width: 2px 0 0 1px; }
.type {
  width: 100%; height: 72px; padding: 0 2px 0 3px; text-align: left;
  background: linear-gradient(#fdfdfd, #ebebed); border: 1px solid #c8c8c8; border-left: 0;
}
.thumb { width: 66px; height: 66px; border: 1px solid #c8c8c8; background: #fff; display: flex; align-items: center; }
.thumb i { flex: 1; height: 16px; background: #d67b84; border: 1px solid #4a2a2e; }
.tname { flex: 1; padding-left: 4px; line-height: 16px; color: #444; }
.p-props .tri, .type .tri { border-width: 4px; border-bottom: 0; }
.filter { display: flex; height: 24px; }
.sel { width: 266px; display: grid; align-items: center; margin-bottom: 1px; }
.sel > * { grid-area: 1 / 1; }
.sel select {
  appearance: none; width: 100%; height: 23px; padding: 0 3px;
  font: inherit; color: #222; background: #ececec; border: 1px solid #a8a8a8; border-radius: 0;
}
.sel svg { justify-self: end; margin-right: 4px; pointer-events: none; }
.edit { gap: 4px; padding: 0 0 3px 6px; }
.gridwrap { display: flex; height: 294px; }
.gridclip { flex: 1; overflow: hidden; background: #fff; }
.grid { width: 100%; table-layout: fixed; border-collapse: separate; border-spacing: 0; }
.c1 { width: 160px; } .c2 { width: 160px; }
.grid tr { height: 18px; }
.grid th, .grid td { height: 18px; padding: 0 0 0 2px; text-align: left; font-weight: 400; line-height: 17px; white-space: nowrap; border: dotted #8a8a8a; border-width: 0 1px 1px 0; }
.grid th { padding-left: 8px; }
.grid .gh th { padding: 0 6px 0 2px; background: #dcdcdc; border: 0; line-height: 18px; }
.gh span { display: flex; justify-content: space-between; align-items: center; }
.dis { color: #808080; }
.grid td.edt { padding: 0; }
.edt input { display: block; width: 100%; height: 17px; padding: 0 1px; border: 1px solid #111; font: inherit; color: inherit; }
.grid input[type="checkbox"] {
  appearance: none; display: block; width: 13px; height: 13px; margin: 3px 0 0 1px;
  background: #fff; border: 1px solid #555;
}
.grid input[type="checkbox"]:disabled { background: #e6e6e6; border-color: #bdbdbd; }
.grid input:checked::after {
  content: ""; display: block; width: 9px; height: 9px; margin: 1px; background: #111;
  clip-path: polygon(0 50%, 15% 35%, 38% 58%, 85% 0, 100% 12%, 40% 92%);
}
.vbar { flex: none; width: 17px; display: flex; flex-direction: column; padding: 0 0 0 1px; }
.vbar button { height: 18px; }
.track { flex: 1; }
.track i { display: block; height: 152px; background: #cdcdcd; }
.pf { height: 26px; display: flex; justify-content: space-between; align-items: center; padding: 0 2px 2px; }
.pf a { color: #1a5fb4; }
.pf button { width: 74px; height: 22px; border: 1px solid #cfcfcf; color: #888; background: #efefef; }
.browser { flex: 1; min-height: 0; display: flex; flex-direction: column; margin-top: 5px; border-top: 1px solid #e4e4e4; }
.browser .ph { flex: none; }

.tree {
  flex: 1; min-height: 0; overflow: hidden; list-style: none;
  margin: 1px 1px 0; padding: 0; background: #fff;
  border: solid #777; border-width: 2px 0 0 1px;
}
.tree li { display: flex; align-items: center; height: 18px; white-space: nowrap; }
.g, .tg { flex: none; width: 20px; height: 18px; background: repeating-linear-gradient(#9a9a9a 0 1px, transparent 1px 2px) 8px 0 / 1px 100% no-repeat; }
.g.end, .tg.last { background-size: 1px 10px; }
.tg.first { background-position: 8px 10px; }
.tree .g + .g + .g + .h, .tree .g.end + .h { margin-left: -11px; width: 14px; }
.tg { justify-content: flex-start; padding: 2px 0 0 4px; }
.tg::before {
  content: ""; width: 9px; height: 9px; border: 1px solid #8a8a8a;
  background:
    linear-gradient(#2a3f7a, #2a3f7a) center / 5px 1px no-repeat,
    linear-gradient(#2a3f7a, #2a3f7a) center / 1px 5px no-repeat,
    #f4f4f4;
}
.tg.m::before { background: linear-gradient(#2a3f7a, #2a3f7a) center / 5px 1px no-repeat, #f4f4f4; }
.h { flex: none; width: 9px; margin-left: -6px; height: 1px; margin-top: 2px; background: repeating-linear-gradient(90deg, #9a9a9a 0 1px, transparent 1px 2px); }
.h + svg { margin-left: -3px; }
.tree span { padding: 0 3px; }
.tree svg + span { padding-left: 6px; }
.tree .cur { background: #e1e1e1; }

.view { flex: 1; min-width: 0; margin-left: 4px; background: #fff; border: solid #666; border-width: 1px 0 0 1px; }
.scene { overflow: visible; position: relative; }
.dim { font: 13px "Liberation Sans", Arial, sans-serif; fill: #173f94; }
.marks path { fill: none; stroke: #ea1c24; stroke-width: 4; stroke-linejoin: round; }
```
